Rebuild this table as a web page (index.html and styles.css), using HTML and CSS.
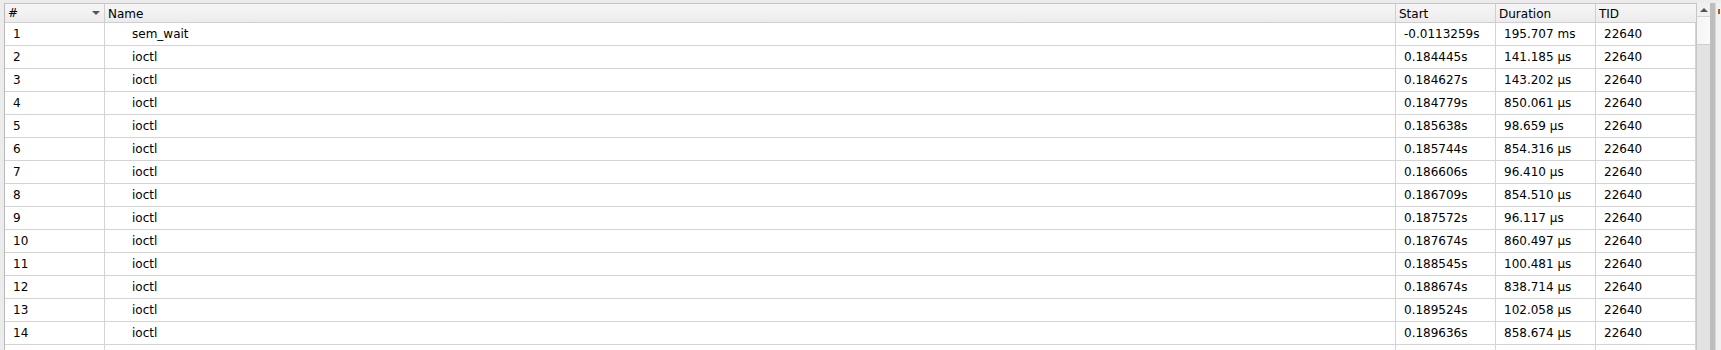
FILE: index.html
```html
<!DOCTYPE html>
<html>
<head>
<meta charset="utf-8">
<link rel="stylesheet" href="styles.css">
</head>
<body>
<div class="app">
  <div class="view">
    <div class="grid">
      <div class="hcell hnum"><span>#</span><span class="sort"></span></div>
      <div class="hcell">Name</div>
      <div class="hcell">Start</div>
      <div class="hcell">Duration</div>
      <div class="hcell hlast">TID</div>

      <div class="cell">1</div><div class="cell name">sem_wait</div><div class="cell">-0.0113259s</div><div class="cell">195.707 ms</div><div class="cell">22640</div>
      <div class="cell">2</div><div class="cell name">ioctl</div><div class="cell">0.184445s</div><div class="cell">141.185 µs</div><div class="cell">22640</div>
      <div class="cell">3</div><div class="cell name">ioctl</div><div class="cell">0.184627s</div><div class="cell">143.202 µs</div><div class="cell">22640</div>
      <div class="cell">4</div><div class="cell name">ioctl</div><div class="cell">0.184779s</div><div class="cell">850.061 µs</div><div class="cell">22640</div>
      <div class="cell">5</div><div class="cell name">ioctl</div><div class="cell">0.185638s</div><div class="cell">98.659 µs</div><div class="cell">22640</div>
      <div class="cell">6</div><div class="cell name">ioctl</div><div class="cell">0.185744s</div><div class="cell">854.316 µs</div><div class="cell">22640</div>
      <div class="cell">7</div><div class="cell name">ioctl</div><div class="cell">0.186606s</div><div class="cell">96.410 µs</div><div class="cell">22640</div>
      <div class="cell">8</div><div class="cell name">ioctl</div><div class="cell">0.186709s</div><div class="cell">854.510 µs</div><div class="cell">22640</div>
      <div class="cell">9</div><div class="cell name">ioctl</div><div class="cell">0.187572s</div><div class="cell">96.117 µs</div><div class="cell">22640</div>
      <div class="cell">10</div><div class="cell name">ioctl</div><div class="cell">0.187674s</div><div class="cell">860.497 µs</div><div class="cell">22640</div>
      <div class="cell">11</div><div class="cell name">ioctl</div><div class="cell">0.188545s</div><div class="cell">100.481 µs</div><div class="cell">22640</div>
      <div class="cell">12</div><div class="cell name">ioctl</div><div class="cell">0.188674s</div><div class="cell">838.714 µs</div><div class="cell">22640</div>
      <div class="cell">13</div><div class="cell name">ioctl</div><div class="cell">0.189524s</div><div class="cell">102.058 µs</div><div class="cell">22640</div>
      <div class="cell">14</div><div class="cell name">ioctl</div><div class="cell">0.189636s</div><div class="cell">858.674 µs</div><div class="cell">22640</div>
      <div class="cell"></div><div class="cell name"></div><div class="cell"></div><div class="cell"></div><div class="cell"></div>
    </div>
  </div>
  <div class="scrollbar">
    <div class="track">
      <div class="up"><span class="arrow"></span></div>
      <div class="thumb"></div>
    </div>
    <div class="edge"></div>
  </div>
  <div class="side"><span class="mark"></span></div>
</div>
</body>
</html>
```
FILE: styles.css
```css
html, body {
  margin: 0;
  padding: 0;
  height: 350px;
  overflow: hidden;
  background: #ececec;
  font-family: "DejaVu Sans", Verdana, sans-serif;
  font-size: 12px;
  color: #000;
}
.app {
  display: flex;
  height: 350px;
  padding: 3px 0 0 4px;
  box-sizing: border-box;
}
.view {
  width: 1692px;
  background: #fff;
  border-left: 1px solid #b9b9b9;
  border-top: 1px solid #c4c4c4;
  box-sizing: border-box;
  overflow: hidden;
}
.grid {
  display: grid;
  grid-template-columns: 100px 1291px 100px 100px 100px;
  grid-auto-rows: 23px;
  grid-template-rows: 19px;
}
.hcell {
  box-sizing: border-box;
  border-right: 1px solid #cfcfcf;
  border-bottom: 1px solid #cfcfcf;
  background: linear-gradient(#f6f6f6, #ececec);
  padding-left: 3px;
  line-height: 20px;
  white-space: nowrap;
  overflow: hidden;
}
.hnum {
  display: flex;
  align-items: center;
  justify-content: space-between;
  padding-right: 4px;
}
.sort {
  width: 0;
  height: 0;
  border-left: 4px solid transparent;
  border-right: 4px solid transparent;
  border-top: 4px solid #555;
  margin-top: -1px;
}
.hlast { border-right: none; }
.cell {
  box-sizing: border-box;
  border-right: 1px solid #d4d4d4;
  border-bottom: 1px solid #d4d4d4;
  padding-left: 8px;
  line-height: 23px;
  white-space: nowrap;
  overflow: hidden;
}
.cell.name { padding-left: 27px; }
.scrollbar {
  display: flex;
  width: 19px;
  border-left: 1px solid #c6c6c6;
  box-sizing: border-box;
}
.track {
  width: 13px;
  background: #e2e2e2;
  display: flex;
  flex-direction: column;
}
.up {
  height: 13px;
  display: flex;
  align-items: center;
  justify-content: center;
  background: #f0f0f0;
  border-bottom: 1px solid #d6d6d6;
}
.arrow {
  width: 0;
  height: 0;
  border-left: 4px solid transparent;
  border-right: 4px solid transparent;
  border-bottom: 4px solid #555;
}
.thumb {
  height: 27px;
  background: linear-gradient(90deg, #f4f4f4, #fafafa);
  border-bottom: 1px solid #cfcfcf;
}
.edge {
  width: 5px;
  background: #bdbdbd;
}
.side {
  flex: 1;
  background: #f0f0f0;
  border-left: 1px solid #d8d8d8;
  position: relative;
}
.mark {
  position: absolute;
  left: 2px;
  top: 6px;
  width: 2px;
  height: 5px;
  background: #b15a17;
}
```
